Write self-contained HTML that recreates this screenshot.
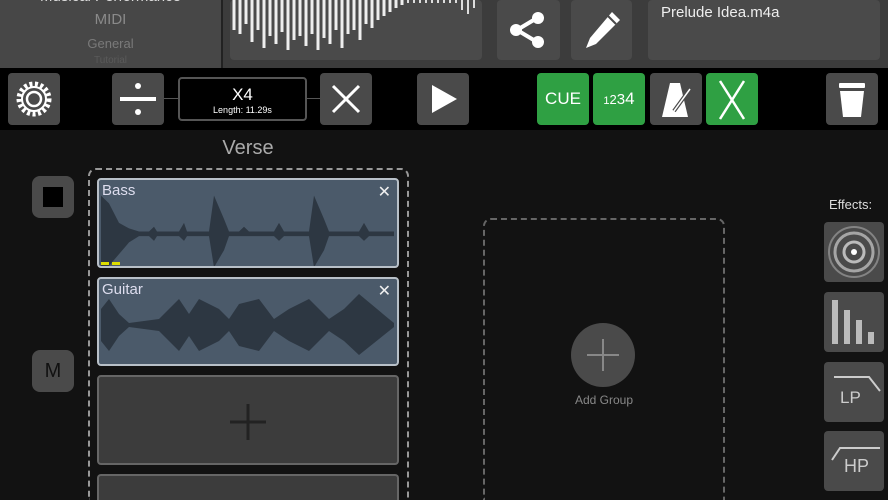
<!DOCTYPE html><html style="width:888px;height:500px;overflow:hidden"><head><style>
*{margin:0;padding:0;box-sizing:border-box}
body{width:888px;height:500px;overflow:hidden;background:#121212;font-family:"Liberation Sans",sans-serif;position:relative}
.a{position:absolute}
.btn{position:absolute;background:#4a4a4a;border-radius:4px}
.g{background:#2fa043}
.clip{position:absolute;left:97px;width:302px;border:2px solid #b8c0c8;border-radius:4px;background:#4b5a6a}
.lbl{position:absolute;left:3px;top:2px;color:#dde;font-size:15px}
.x{position:absolute;right:6px;top:2px;color:#eee;font-size:16px}
</style></head><body>
<div class="a" style="left:0;top:0;width:888px;height:68px;background:#3c3c3c"></div>
<div class="a" style="left:0;top:0;width:221px;height:68px;background:#474747"></div>
<div class="a" style="left:221px;top:0;width:2px;height:68px;background:#222"></div>
<div class="a" style="left:0;top:-12px;width:221px;text-align:center;color:#ddd;font-size:15px">Musical Performance</div>
<div class="a" style="left:0;top:11px;width:221px;text-align:center;color:#8a8a8a;font-size:15px">MIDI</div>
<div class="a" style="left:0;top:36px;width:221px;text-align:center;color:#7a7a7a;font-size:13px">General</div>
<div class="a" style="left:0;top:55px;width:221px;text-align:center;color:#5a5a5a;font-size:10px">Tutorial</div>
<div class="a" style="left:230px;top:0;width:252px;height:60px;background:#4a4a4a;border-radius:4px"></div>
<svg class="a" style="left:232px;top:0" width="250" height="60">
<g stroke="#eee" stroke-width="3">
<line x1="2" y1="0" x2="2" y2="30"/><line x1="8" y1="0" x2="8" y2="34"/><line x1="14" y1="0" x2="14" y2="24"/><line x1="20" y1="0" x2="20" y2="42"/><line x1="26" y1="0" x2="26" y2="30"/><line x1="32" y1="0" x2="32" y2="48"/><line x1="38" y1="0" x2="38" y2="36"/><line x1="44" y1="0" x2="44" y2="44"/><line x1="50" y1="0" x2="50" y2="32"/><line x1="56" y1="0" x2="56" y2="50"/><line x1="62" y1="0" x2="62" y2="40"/><line x1="68" y1="0" x2="68" y2="36"/><line x1="74" y1="0" x2="74" y2="46"/><line x1="80" y1="0" x2="80" y2="34"/><line x1="86" y1="0" x2="86" y2="50"/><line x1="92" y1="0" x2="92" y2="38"/><line x1="98" y1="0" x2="98" y2="44"/><line x1="104" y1="0" x2="104" y2="30"/><line x1="110" y1="0" x2="110" y2="48"/><line x1="116" y1="0" x2="116" y2="34"/><line x1="122" y1="0" x2="122" y2="30"/><line x1="128" y1="0" x2="128" y2="40"/><line x1="134" y1="0" x2="134" y2="24"/><line x1="140" y1="0" x2="140" y2="28"/><line x1="146" y1="0" x2="146" y2="20"/><line x1="152" y1="0" x2="152" y2="16"/><line x1="158" y1="0" x2="158" y2="12"/><line x1="164" y1="0" x2="164" y2="8"/><line x1="170" y1="0" x2="170" y2="5"/></g>
<g stroke="#ddd" stroke-width="2"><line x1="176" y1="0" x2="176" y2="3"/><line x1="182" y1="0" x2="182" y2="3"/><line x1="188" y1="0" x2="188" y2="3"/><line x1="194" y1="0" x2="194" y2="3"/><line x1="200" y1="0" x2="200" y2="3"/><line x1="206" y1="0" x2="206" y2="3"/><line x1="212" y1="0" x2="212" y2="3"/><line x1="218" y1="0" x2="218" y2="3"/><line x1="224" y1="0" x2="224" y2="3"/><line x1="230" y1="0" x2="230" y2="10"/><line x1="236" y1="0" x2="236" y2="14"/><line x1="242" y1="0" x2="242" y2="8"/></g></svg>
<div class="btn" style="left:497px;top:0;width:63px;height:60px"></div>
<svg class="a" style="left:505px;top:8px" width="46" height="44"><g stroke="#fff" stroke-width="4"><line x1="32" y1="10" x2="12" y2="22"/><line x1="12" y1="22" x2="32" y2="34"/></g><g fill="#fff"><circle cx="33" cy="10" r="6"/><circle cx="11" cy="22" r="6"/><circle cx="33" cy="34" r="6"/></g></svg>
<div class="btn" style="left:571px;top:0;width:61px;height:60px"></div>
<svg class="a" style="left:578px;top:6px" width="48" height="48"><path d="M34 6 L42 14 L18 38 L8 42 L12 32 Z" fill="#fff"/><line x1="30" y1="10" x2="38" y2="18" stroke="#4a4a4a" stroke-width="2"/></svg>
<div class="btn" style="left:648px;top:0;width:232px;height:60px"></div>
<div class="a" style="left:661px;top:4px;color:#eee;font-size:15px">Prelude Idea.m4a</div>
<div class="a" style="left:0;top:68px;width:888px;height:62px;background:#000"></div>
<div class="btn" style="left:8px;top:73px;width:52px;height:52px"></div>
<svg class="a" style="left:14px;top:79px" width="40" height="40"><circle cx="20" cy="20" r="15" fill="none" stroke="#fff" stroke-width="5" stroke-dasharray="3 2.5"/><circle cx="20" cy="20" r="12" fill="none" stroke="#fff" stroke-width="2"/><circle cx="20" cy="20" r="7" fill="none" stroke="#fff" stroke-width="2.5"/></svg>
<div class="btn" style="left:112px;top:73px;width:52px;height:52px"></div>
<svg class="a" style="left:112px;top:73px" width="52" height="52"><rect x="8" y="24" width="36" height="4" fill="#fff"/><circle cx="26" cy="13" r="3" fill="#fff"/><circle cx="26" cy="39" r="3" fill="#fff"/></svg>
<div class="a" style="left:164px;top:98px;width:156px;height:1px;background:#555"></div>
<div class="a" style="left:178px;top:77px;width:129px;height:44px;background:#000;border:2px solid #555;border-radius:4px;color:#fff;text-align:center"><div style="font-size:17px;margin-top:6px">X4</div><div style="font-size:9px">Length: 11.29s</div></div>
<div class="btn" style="left:320px;top:73px;width:52px;height:52px"></div>
<svg class="a" style="left:320px;top:73px" width="52" height="52"><path d="M13 13L39 39M39 13L13 39" stroke="#fff" stroke-width="3"/></svg>
<div class="btn" style="left:417px;top:73px;width:52px;height:52px"></div>
<svg class="a" style="left:417px;top:73px" width="52" height="52"><path d="M15 12L40 26L15 40Z" fill="#fff"/></svg>
<div class="btn g" style="left:537px;top:73px;width:52px;height:52px;color:#fff;font-size:17px;text-align:center;line-height:52px">CUE</div>
<div class="btn g" style="left:593px;top:73px;width:52px;height:52px;color:#fff;text-align:center;line-height:52px"><span style="font-size:11px">1</span><span style="font-size:13px">2</span><span style="font-size:15px">3</span><span style="font-size:17px">4</span></div>
<div class="btn" style="left:650px;top:73px;width:52px;height:52px"></div>
<svg class="a" style="left:650px;top:73px" width="52" height="52"><path d="M20 10H30L38 44H12Z" fill="#fff"/><path d="M24 38L40 16" stroke="#4a4a4a" stroke-width="4"/><path d="M24 38L40 16" stroke="#fff" stroke-width="1.5"/></svg>
<div class="btn g" style="left:706px;top:73px;width:52px;height:52px"></div>
<svg class="a" style="left:706px;top:73px" width="52" height="52"><path d="M14 8L38 46M38 8L14 46" stroke="#fff" stroke-width="2.5"/></svg>
<div class="btn" style="left:826px;top:73px;width:52px;height:52px"></div>
<svg class="a" style="left:826px;top:73px" width="52" height="52"><rect x="13" y="10" width="26" height="5" rx="1" fill="#fff"/><path d="M14 18H38L35 44H17Z" fill="#fff"/></svg>
<div class="a" style="left:88px;top:137px;width:320px;text-align:center;color:#aaa;font-size:20px">Verse</div>
<div class="a" style="left:88px;top:168px;width:321px;height:332px;border:2px dashed #999;border-bottom:none;border-radius:8px 8px 0 0"></div>
<div class="btn" style="left:32px;top:176px;width:42px;height:42px;border-radius:8px"><div style="position:absolute;left:11px;top:11px;width:20px;height:20px;background:#000"></div></div>
<div class="btn" style="left:32px;top:350px;width:42px;height:42px;border-radius:8px;color:#111;font-size:20px;text-align:center;line-height:42px">M</div>
<div class="clip" style="top:178px;height:90px">
<svg class="a" style="left:0;top:0" width="298" height="86"><path d="M2 20L10 30L20 55L30 62L40 66L50 66L55 60L58 66L80 66L85 55L88 66L110 66L115 20L125 50L130 66L140 66L145 60L150 66L175 66L180 55L185 66L210 66L215 20L225 50L230 66L260 66L265 55L270 66L295 66L295 72L270 72L265 78L260 72L230 72L225 90L215 112L210 72L185 72L180 78L175 72L130 72L125 90L115 112L110 72L88 72L85 78L80 72L58 72L55 78L50 72L40 72L30 80L20 95L10 110L2 120Z" fill="#2d3742" transform="scale(1 0.78)"/></svg>
<div class="lbl">Bass</div><div class="x">✕</div>
<div class="a" style="left:2px;top:82px;width:8px;height:3px;background:#dd0"></div><div class="a" style="left:13px;top:82px;width:8px;height:3px;background:#dd0"></div></div>
<div class="clip" style="top:277px;height:89px">
<svg class="a" style="left:0;top:0" width="298" height="85"><path d="M2 30L10 20L20 35L30 44L60 40L70 30L80 20L90 35L100 20L120 30L130 40L140 25L160 20L175 40L190 30L210 20L230 40L245 30L260 15L290 40L295 44L295 48L290 52L260 76L245 62L230 52L210 72L190 62L175 52L160 72L140 67L130 52L120 62L100 72L90 57L80 72L70 62L60 52L30 48L20 57L10 72L2 62Z" fill="#2d3742"/></svg>
<div class="lbl">Guitar</div><div class="x">✕</div></div>
<div class="clip" style="top:375px;height:90px;background:#3c3c3c;border-color:#666">
<svg class="a" style="left:131px;top:27px" width="36" height="36"><path d="M18 0V36M0 18H36" stroke="#222" stroke-width="3"/></svg></div>
<div class="clip" style="top:474px;height:26px;background:#3c3c3c;border-color:#666;border-bottom:none;border-radius:4px 4px 0 0"></div>
<div class="a" style="left:483px;top:218px;width:242px;height:282px;border:2px dashed #666;border-bottom:none;border-radius:8px 8px 0 0"></div>
<div class="a" style="left:571px;top:323px;width:64px;height:64px;border-radius:50%;background:#4a4a4a"></div>
<svg class="a" style="left:587px;top:339px" width="32" height="32"><path d="M16 0V32M0 16H32" stroke="#888" stroke-width="2"/></svg>
<div class="a" style="left:483px;top:393px;width:242px;text-align:center;color:#888;font-size:12px">Add Group</div>
<div class="a" style="left:829px;top:197px;color:#ddd;font-size:13px">Effects:</div>
<div class="btn" style="left:824px;top:222px;width:60px;height:60px"></div>
<svg class="a" style="left:824px;top:222px" width="60" height="60"><g fill="none" stroke="#bbb"><circle cx="30" cy="30" r="25" stroke-width="2" opacity=".5"/><circle cx="30" cy="30" r="19" stroke-width="3" opacity=".8"/><circle cx="30" cy="30" r="10" stroke-width="3"/></g><circle cx="30" cy="30" r="3" fill="#fff"/></svg>
<div class="btn" style="left:824px;top:292px;width:60px;height:60px"></div>
<svg class="a" style="left:824px;top:292px" width="60" height="60"><g fill="#bbb"><rect x="8" y="8" width="6" height="44"/><rect x="20" y="18" width="6" height="34"/><rect x="32" y="28" width="6" height="24"/><rect x="44" y="40" width="6" height="12"/></g></svg>
<div class="btn" style="left:824px;top:362px;width:60px;height:60px"></div>
<svg class="a" style="left:824px;top:362px" width="60" height="60"><path d="M10 15H45L56 29" stroke="#ccc" stroke-width="2" fill="none"/><text x="16" y="41" fill="#ccc" font-size="17" font-family="Liberation Sans">LP</text></svg>
<div class="btn" style="left:824px;top:431px;width:60px;height:60px"></div>
<svg class="a" style="left:824px;top:431px" width="60" height="60"><path d="M8 29L16 17H56" stroke="#ccc" stroke-width="2" fill="none"/><text x="20" y="41" fill="#ccc" font-size="18" font-family="Liberation Sans">HP</text></svg>
</body></html>
